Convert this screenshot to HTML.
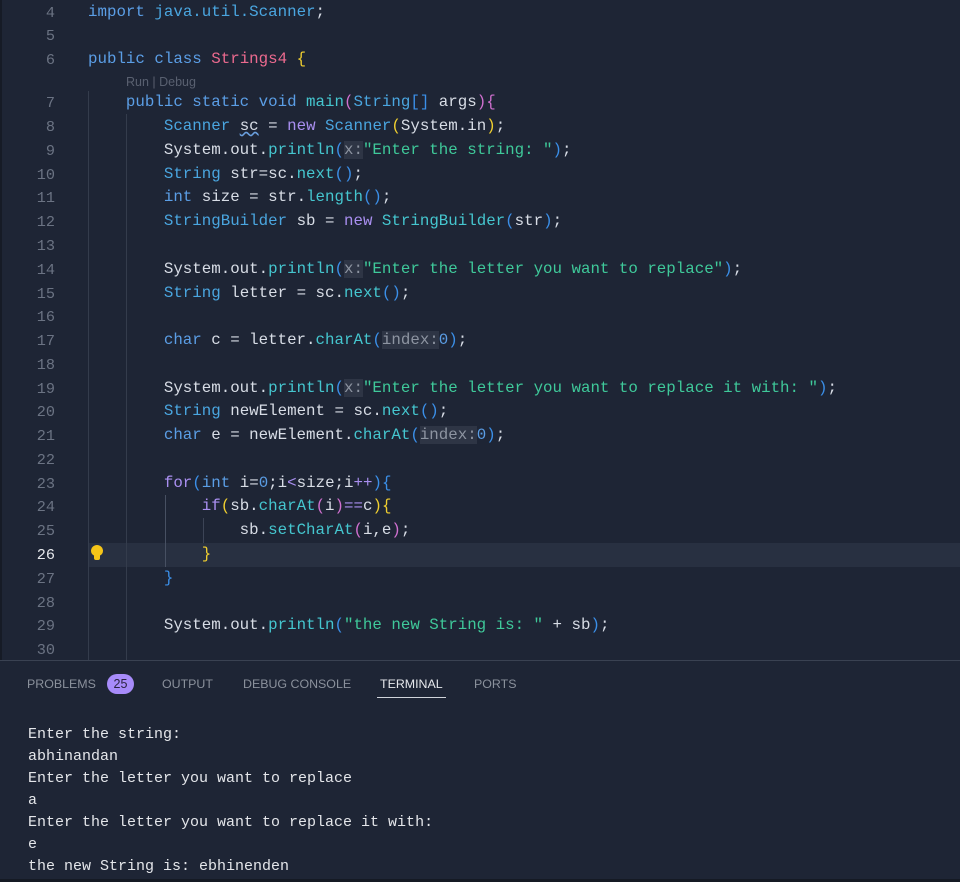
<!DOCTYPE html>
<html><head><meta charset="utf-8"><style>
html,body{margin:0;padding:0;}
body{width:960px;height:882px;background:#1e2535;position:relative;overflow:hidden;font-family:"Liberation Mono",monospace;}
.ln{position:absolute;left:0;width:55px;text-align:right;color:#6b7383;font-size:15.2px;margin-top:2px;}
.c{position:absolute;left:88px;white-space:pre;color:#d8dde6;font-size:15.8px;margin-top:2px;}
.k{color:#5b9ee6}.p{color:#a98ff0}.t{color:#4aa6e0}.n{color:#ec6a8f}.m{color:#45c6cf}.s{color:#3fc99a}
.y{color:#f0cf30}.v{color:#d070d0}.b{color:#3b8fe8}.num{color:#5b9ee6}
.h{background:#2e3545;color:#8d94a1}
.g{position:absolute;width:1px;background:#343c4c;}
.tab{position:absolute;top:677px;font-family:"Liberation Sans",sans-serif;font-size:12.4px;color:#8b919c;}
.term{position:absolute;left:28px;top:724px;white-space:pre;color:#e4e6ea;font-size:15px;line-height:22px;font-family:"Liberation Mono",monospace;}
</style></head><body>
<div style="position:absolute;left:0;top:0;width:2px;height:882px;background:#161b26"></div>
<div style="position:absolute;left:88px;top:543px;width:872px;height:24px;background:#283041"></div>
<div class="g" style="left:88px;top:91px;height:570px"></div>
<div class="g" style="left:126px;top:114px;height:547px"></div>
<div class="g" style="left:165px;top:495px;height:72px;background:#475062"></div>
<div class="g" style="left:203px;top:518px;height:25px;background:#3c4456"></div>

<div class="ln" style="top:2px">4</div><div class="c" style="top:1px"><span class="k">import</span> <span class="t">java.util.Scanner</span>;</div>
<div class="ln" style="top:25px">5</div>
<div class="ln" style="top:49px">6</div><div class="c" style="top:48px"><span class="k">public class</span> <span class="n">Strings4</span> <span class="y">{</span></div>
<div style="position:absolute;left:126px;top:75px;font-family:'Liberation Sans',sans-serif;font-size:12.5px;color:#596070">Run | Debug</div>

<div class="ln" style="top:92px">7</div><div class="c" style="top:91px">    <span class="k">public static void</span> <span class="m">main</span><span class="v">(</span><span class="t">String</span><span class="b">[]</span> args<span class="v">)</span><span class="v">{</span></div>
<div class="ln" style="top:116px">8</div><div class="c" style="top:115px">        <span class="t">Scanner</span> <span style="text-decoration:underline wavy #6aa0e0">sc</span> = <span class="p">new</span> <span class="t">Scanner</span><span class="y">(</span>System.in<span class="y">)</span>;</div>
<div class="ln" style="top:140px">9</div><div class="c" style="top:139px">        System.out.<span class="m">println</span><span class="b">(</span><span class="h">x:</span><span class="s">"Enter the string: "</span><span class="b">)</span>;</div>
<div class="ln" style="top:164px">10</div><div class="c" style="top:163px">        <span class="t">String</span> str=sc.<span class="m">next</span><span class="b">()</span>;</div>
<div class="ln" style="top:187px">11</div><div class="c" style="top:186px">        <span class="k">int</span> size = str.<span class="m">length</span><span class="b">()</span>;</div>
<div class="ln" style="top:211px">12</div><div class="c" style="top:210px">        <span class="t">StringBuilder</span> sb = <span class="p">new</span> <span class="m">StringBuilder</span><span class="b">(</span>str<span class="b">)</span>;</div>
<div class="ln" style="top:235px">13</div>
<div class="ln" style="top:259px">14</div><div class="c" style="top:258px">        System.out.<span class="m">println</span><span class="b">(</span><span class="h">x:</span><span class="s">"Enter the letter you want to replace"</span><span class="b">)</span>;</div>
<div class="ln" style="top:283px">15</div><div class="c" style="top:282px">        <span class="t">String</span> letter = sc.<span class="m">next</span><span class="b">()</span>;</div>
<div class="ln" style="top:306px">16</div>
<div class="ln" style="top:330px">17</div><div class="c" style="top:329px">        <span class="k">char</span> c = letter.<span class="m">charAt</span><span class="b">(</span><span class="h">index:</span><span class="num">0</span><span class="b">)</span>;</div>
<div class="ln" style="top:354px">18</div>
<div class="ln" style="top:378px">19</div><div class="c" style="top:377px">        System.out.<span class="m">println</span><span class="b">(</span><span class="h">x:</span><span class="s">"Enter the letter you want to replace it with: "</span><span class="b">)</span>;</div>
<div class="ln" style="top:401px">20</div><div class="c" style="top:400px">        <span class="t">String</span> newElement = sc.<span class="m">next</span><span class="b">()</span>;</div>
<div class="ln" style="top:425px">21</div><div class="c" style="top:424px">        <span class="k">char</span> e = newElement.<span class="m">charAt</span><span class="b">(</span><span class="h">index:</span><span class="num">0</span><span class="b">)</span>;</div>
<div class="ln" style="top:449px">22</div>
<div class="ln" style="top:473px">23</div><div class="c" style="top:472px">        <span class="p">for</span><span class="b">(</span><span class="k">int</span> i=<span class="num">0</span>;i<span class="p">&lt;</span>size;i<span class="p">++</span><span class="b">)</span><span class="b">{</span></div>
<div class="ln" style="top:496px">24</div><div class="c" style="top:495px">            <span class="p">if</span><span class="y">(</span>sb.<span class="m">charAt</span><span class="v">(</span>i<span class="v">)</span><span class="p">==</span>c<span class="y">)</span><span class="y">{</span></div>
<div class="ln" style="top:520px">25</div><div class="c" style="top:519px">                sb.<span class="m">setCharAt</span><span class="v">(</span>i,e<span class="v">)</span>;</div>
<div class="ln" style="top:544px;color:#e6e8ec">26</div><div class="c" style="top:543px">            <span class="y">}</span></div>
<div style="position:absolute;left:91px;top:545px;width:12px;height:11px;border-radius:6px 6px 5px 5px;background:#f5c518"></div>
<div style="position:absolute;left:94px;top:555px;width:6px;height:5px;background:#f5c518;border-radius:0 0 2px 2px"></div>
<div class="ln" style="top:568px">27</div><div class="c" style="top:567px">        <span class="b">}</span></div>
<div class="ln" style="top:592px">28</div>
<div class="ln" style="top:615px">29</div><div class="c" style="top:614px">        System.out.<span class="m">println</span><span class="b">(</span><span class="s">"the new String is: "</span> + sb<span class="b">)</span>;</div>
<div class="ln" style="top:639px">30</div>

<div style="position:absolute;left:0;top:660px;width:960px;height:1px;background:#3a4252"></div>
<div style="position:absolute;left:0;top:661px;width:960px;height:221px;background:#1e2535"></div>
<div class="tab" style="left:27px">PROBLEMS</div>
<div style="position:absolute;left:107px;top:674px;width:27px;height:20px;border-radius:10px;background:#a78bfa;color:#2a2340;font-family:'Liberation Sans',sans-serif;font-size:12.5px;text-align:center;line-height:20px">25</div>
<div class="tab" style="left:162px">OUTPUT</div>
<div class="tab" style="left:243px">DEBUG CONSOLE</div>
<div class="tab" style="left:380px;color:#e6e8ec">TERMINAL</div>
<div style="position:absolute;left:377px;top:697px;width:69px;height:1px;background:#d0d4da"></div>
<div class="tab" style="left:474px">PORTS</div>
<div class="term">Enter the string:
abhinandan
Enter the letter you want to replace
a
Enter the letter you want to replace it with:
e
the new String is: ebhinenden</div>
<div style="position:absolute;left:0;top:879px;width:960px;height:3px;background:#151a24"></div>
</body></html>
